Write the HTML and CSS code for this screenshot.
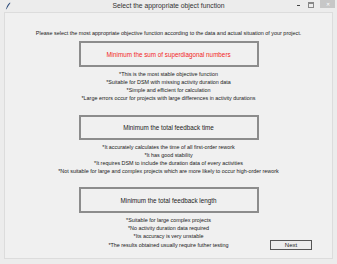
FILE: index.html
```html
<!DOCTYPE html>
<html>
<head>
    <title>Select the appropriate object function</title>
    <link rel="stylesheet" href="styles.css">
</head>
<body>
    <div class="window">
        <div class="titlebar">
            <svg class="app-icon" width="6" height="8" viewBox="0 0 6 8">
                <path d="M5 0.5 C3.5 1.5 2 3.5 1.2 6.5 L0.8 7.6 L1.6 7 C2.6 5 4 3 5.4 1 Z" fill="#2b4a7a"/>
            </svg>
            <span class="title">Select the appropriate object function</span>
            <div class="controls">
                <span class="ctl-min"></span>
                <span class="ctl-max"></span>
                <span class="ctl-close">&#10005;</span>
            </div>
        </div>

        <div class="client">
            <div class="intro">Please select the most appropriate objective function according to the data and actual situation of your project.</div>

            <div class="option-button red">Minimum the sum of superdiagonal numbers</div>
            <div class="notes">
                <div class="note">*This is the most stable objective function</div>
                <div class="note">*Suitable for DSM with missing activity duration data</div>
                <div class="note">*Simple and efficient for calculation</div>
                <div class="note">*Large errors occur for projects with large differences in activity durations</div>
            </div>

            <div class="option-button second">Minimum the total feedback time</div>
            <div class="notes">
                <div class="note">*It accurately calculates the time of all first-order rework</div>
                <div class="note">*It has good stability</div>
                <div class="note">*It requires DSM to include the duration data of every activities</div>
                <div class="note">*Not suitable for large and complex projects which are more likely to occur high-order rework</div>
            </div>

            <div class="option-button third">Minimum the total feedback length</div>
            <div class="notes">
                <div class="note">*Suitable for large complex projects</div>
                <div class="note">*No activity duration data required</div>
                <div class="note">*Its accuracy is very unstable</div>
                <div class="last-row">
                    <span></span>
                    <div class="note">*The results obtained usually require futher testing</div>
                    <div class="next-cell"><span class="next-button">Next</span></div>
                </div>
            </div>
        </div>
    </div>
</body>
</html>
```

FILE: styles.css
```css
body {
    margin: 0;
    padding: 0;
    background-color: #ebebeb;
    font-family: "Liberation Sans", Arial, sans-serif;
    color: #1a1a1a;
}

.window {
    width: 337px;
    height: 264px;
    display: flex;
    flex-direction: column;
    background-color: #ececec;
}

.titlebar {
    height: 12px;
    display: flex;
    align-items: center;
    position: relative;
}

.app-icon {
    margin-left: 5px;
}

.title {
    position: absolute;
    left: 0;
    right: 0;
    text-align: center;
    font-size: 6.8px;
    color: #333333;
    top: 2px;
}

.controls {
    margin-left: auto;
    display: flex;
    align-items: flex-start;
    height: 12px;
}

.ctl-min {
    width: 3px;
    height: 1px;
    background-color: #444444;
    margin-top: 5px;
    margin-right: 8px;
}

.ctl-max {
    width: 4px;
    height: 3px;
    border: 1px solid #888888;
    border-top-width: 2px;
    margin-top: 2px;
    margin-right: 6px;
}

.ctl-close {
    width: 15px;
    height: 8px;
    background-color: #c7c7c7;
    color: #ffffff;
    font-size: 5px;
    line-height: 8px;
    text-align: center;
    margin-right: 2px;
}

.client {
    flex: 1;
    margin: 0 4px 5px 4px;
    background-color: #f0f0f0;
    border: 1px solid #dcdcdc;
    display: flex;
    flex-direction: column;
    align-items: center;
}

.intro {
    margin-top: 16px;
    font-size: 5.45px;
    line-height: 8px;
}

.option-button {
    width: 176px;
    height: 22px;
    margin-top: 4px;
    border: 2px solid #8c8c8c;
    display: flex;
    align-items: center;
    justify-content: center;
    font-size: 6.3px;
    color: #222222;
}

.option-button.red {
    color: #f21c1c;
}

.option-button.second {
    margin-top: 13px;
    height: 21px;
}

.option-button.third {
    margin-top: 12px;
}

.notes {
    margin-top: 3px;
    width: 100%;
    display: flex;
    flex-direction: column;
    align-items: center;
}

.note {
    font-size: 5.4px;
    line-height: 8px;
    white-space: nowrap;
}

.last-row {
    width: 100%;
    display: grid;
    grid-template-columns: 1fr auto 1fr;
    align-items: center;
}

.next-cell {
    display: flex;
    justify-content: flex-end;
    padding-right: 20px;
}

.next-button {
    width: 40px;
    height: 8px;
    border: 1px solid #555555;
    background-color: #ececec;
    font-size: 6px;
    line-height: 8px;
    text-align: center;
}
```
